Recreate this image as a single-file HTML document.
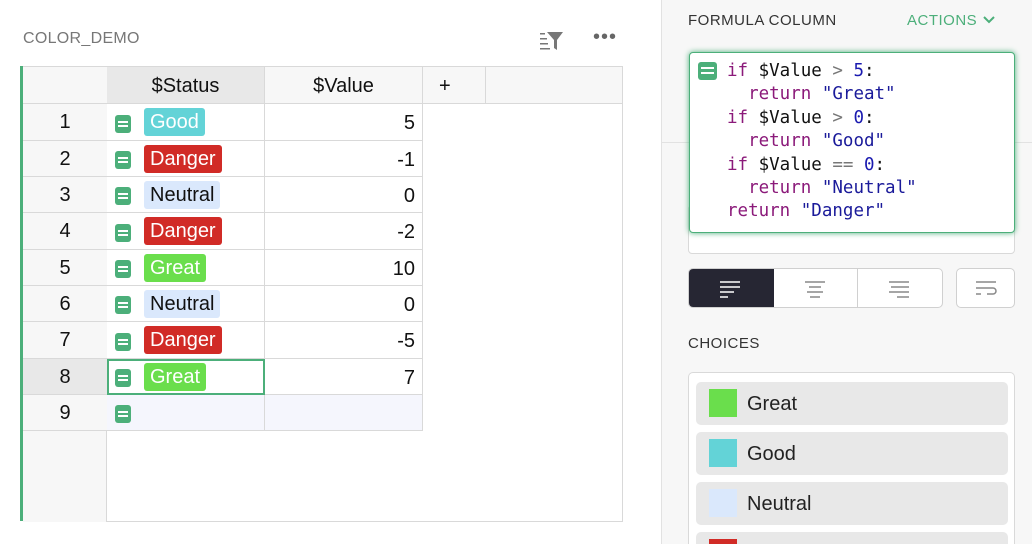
<!DOCTYPE html>
<html style="width:1032px;height:544px;overflow:hidden"><head><style>
*{box-sizing:border-box;margin:0;padding:0}
body{width:1032px;height:544px;overflow:hidden;background:#fff;font-family:"Liberation Sans",sans-serif;position:relative}
.a{position:absolute}
.cell{position:absolute;border-right:1px solid #d9d9d9;border-bottom:1px solid #d9d9d9;font-size:20px;color:#111}
.rn{background:#f7f7f7;text-align:center;line-height:36px}
.val{text-align:right;padding-right:7px;line-height:38px}
.ic{position:absolute;left:8px;width:16px;height:18px;background:#4caf7a;border-radius:3px}
.ic:before,.ic:after{content:"";position:absolute;left:3px;right:3px;height:2px;background:#fff}
.ic:before{top:6px}.ic:after{top:10px}
.chip{position:absolute;left:37px;top:4px;height:28px;line-height:28px;padding:0 6px;border-radius:3px;font-size:20px}
.mono{font-family:"DejaVu Sans Mono","Liberation Mono",monospace;font-size:17.5px;line-height:23.4px;white-space:pre}
.kw{color:#8b1a7a}.st{color:#1a1a9a}.nu{color:#1a1ab0}.op{color:#777}
.item{position:absolute;left:7px;width:312px;height:43px;background:#e8e8e8;border-radius:5px;font-size:20px;color:#222}
.item .sw{position:absolute;left:13px;top:7px;width:28px;height:28px}
.item span{position:absolute;left:51px;top:11px}
</style></head><body>
<div class="a" style="left:23px;top:30px;font-size:16px;color:#777;letter-spacing:.3px">COLOR_DEMO</div>
<svg class="a" style="left:538px;top:30px" width="26" height="22" viewBox="0 0 26 22"><g fill="#777"><rect x="2" y="3" width="5" height="1.5"/><rect x="2" y="8" width="7" height="1.5"/><rect x="2" y="13" width="8" height="1.5"/><rect x="2" y="18" width="10" height="1.5"/><path d="M9 2h16l-6 8v10l-3-2v-8z"/></g></svg>
<div class="a" style="left:593px;top:26px;font-size:20px;color:#666;letter-spacing:1px">•••</div>
<div class="a" style="left:20px;top:66px;width:3px;height:455px;background:#4caf7a"></div>
<div class="a" style="left:23px;top:66px;width:600px;height:456px;border:1px solid #d9d9d9;border-left:none;background:#fff"></div>
<div class="a" style="left:23px;top:104px;width:84px;height:418px;background:#f7f7f7;border-right:1px solid #d9d9d9"></div>
<div class="cell" style="left:23px;top:66px;width:85px;height:38px;background:#f7f7f7;border-top:1px solid #d9d9d9"></div>
<div class="cell" style="left:107px;top:66px;width:158px;height:38px;background:#e8e8e8;text-align:center;line-height:38px;border-top:1px solid #d9d9d9">$Status</div>
<div class="cell" style="left:265px;top:66px;width:158px;height:38px;background:#f7f7f7;text-align:center;line-height:38px;border-top:1px solid #d9d9d9">$Value</div>
<div class="cell" style="left:423px;top:66px;width:63px;height:38px;background:#f7f7f7;line-height:38px;padding-left:16px;border-top:1px solid #d9d9d9">+</div>
<div class="cell" style="left:486px;top:66px;width:137px;height:38px;background:#f7f7f7;border-top:1px solid #d9d9d9"></div>
<div id="rows"></div>
<script>
var d=[["Good","#63d3d7","#fff","5"],["Danger","#d12b26","#fff","-1"],["Neutral","#dae8fc","#111","0"],["Danger","#d12b26","#fff","-2"],["Great","#6ade4c","#fff","10"],["Neutral","#dae8fc","#111","0"],["Danger","#d12b26","#fff","-5"],["Great","#6ade4c","#fff","7"],["","","","" ]];
var tops=[104,141,177,213,250,286,322,359,395],h="";
for(var i=0;i<9;i++){var t=tops[i],hh=(i<8?tops[i+1]:431)-t,r=d[i];
var bg=i==8?"#f5f6fd":"#fff";
h+='<div class="cell rn" style="left:23px;top:'+t+'px;width:85px;height:'+hh+'px;'+(i==7?'background:#e8e8e8':'')+'">'+(i+1)+'</div>';
h+='<div class="cell" style="left:107px;top:'+t+'px;width:158px;height:'+hh+'px;background:'+bg+';'+(i==7?'outline:2px solid #4caf7a;outline-offset:-2px':'')+'"><div class="ic" style="top:'+(hh/2-8)+'px"></div>'+(r[0]?'<div class="chip" style="background:'+r[1]+';color:'+r[2]+'">'+r[0]+'</div>':'')+'</div>';
h+='<div class="cell val" style="left:265px;top:'+t+'px;width:158px;height:'+hh+'px;background:'+bg+'">'+r[3]+'</div>';}
document.getElementById("rows").innerHTML=h;
</script>
<div class="a" style="left:661px;top:0;width:371px;height:544px;background:#f7f7f7;border-left:1px solid #e2e2e2;overflow:hidden">
<div class="a" style="left:26px;top:372px;width:327px;height:172px;background:#fff;border:1px solid #d9d9d9;border-bottom:none;border-radius:5px 5px 0 0;overflow:hidden">
<div class="item" style="top:9px"><div class="sw" style="background:#6ade4c"></div><span>Great</span></div>
<div class="item" style="top:59px"><div class="sw" style="background:#63d3d7"></div><span>Good</span></div>
<div class="item" style="top:109px"><div class="sw" style="background:#dae8fc"></div><span>Neutral</span></div>
<div class="item" style="top:159px;height:12px;border-radius:5px 5px 0 0"><div class="sw" style="background:#d12b26;height:5px"></div></div>
</div>
</div>
<div class="a" style="left:688px;top:12px;font-size:15px;color:#333;letter-spacing:.5px">FORMULA COLUMN</div>
<div class="a" style="left:907px;top:12px;font-size:15px;color:#4caf7a;letter-spacing:.5px">ACTIONS <svg width="14" height="10" viewBox="0 0 14 10"><path d="M2 2l5 5 5-5" stroke="#4caf7a" stroke-width="2" fill="none"/></svg></div>
<div class="a" style="left:661px;top:142px;width:371px;height:1px;background:#e2e2e2"></div>
<div class="a" style="left:688px;top:205px;width:327px;height:49px;border:1px solid #d9d9d9;border-radius:4px;background:#fff"></div>
<div class="a" style="left:688px;top:268px;width:255px;height:40px;border:1px solid #d0d0d0;border-radius:5px;background:#fff;overflow:hidden">
<div class="a" style="left:0;top:0;width:85px;height:40px;background:#262633"></div>
<div class="a" style="left:168px;top:0;width:1px;height:40px;background:#d0d0d0"></div></div>
<svg class="a" style="left:718px;top:278px" width="24" height="20"><g stroke="#fff" stroke-width="1.5"><path d="M2 4h20M2 9h20M2 14h14M2 19h8"/></g></svg>
<svg class="a" style="left:803px;top:278px" width="24" height="20"><g stroke="#888" stroke-width="1.5"><path d="M2 4h20M6 9h12M4 14h16M7 19h10"/></g></svg>
<svg class="a" style="left:887px;top:278px" width="24" height="20"><g stroke="#888" stroke-width="1.5"><path d="M2 4h20M4 9h18M2 14h20M10 19h12"/></g></svg>
<div class="a" style="left:956px;top:268px;width:59px;height:40px;border:1px solid #d0d0d0;border-radius:5px;background:#fff"></div>
<svg class="a" style="left:974px;top:278px" width="24" height="20"><g stroke="#888" stroke-width="1.5" fill="none"><path d="M2 4h20M2 10h17a3 3 0 0 1 0 6h-6M2 16h5"/></g></svg>
<div class="a" style="left:689px;top:52px;width:326px;height:181px;background:#fff;border:1px solid #4caf7a;border-radius:4px;box-shadow:0 0 6px #4caf7a"></div>
<div class="a" style="left:698px;top:62px;width:19px;height:18px;background:#4caf7a;border-radius:3px"></div>
<div class="a" style="left:701px;top:67px;width:13px;height:2px;background:#fff"></div>
<div class="a" style="left:701px;top:72px;width:13px;height:2px;background:#fff"></div>
<div class="a mono" style="left:727px;top:60px;color:#111"><span class="kw">if</span> $Value <span class="op">&gt;</span> <span class="nu">5</span>:
  <span class="kw">return</span> <span class="st">"Great"</span>
<span class="kw">if</span> $Value <span class="op">&gt;</span> <span class="nu">0</span>:
  <span class="kw">return</span> <span class="st">"Good"</span>
<span class="kw">if</span> $Value <span class="op">==</span> <span class="nu">0</span>:
  <span class="kw">return</span> <span class="st">"Neutral"</span>
<span class="kw">return</span> <span class="st">"Danger"</span></div>
<div class="a" style="left:688px;top:335px;font-size:15px;color:#333;letter-spacing:.5px">CHOICES</div>
</body></html>
